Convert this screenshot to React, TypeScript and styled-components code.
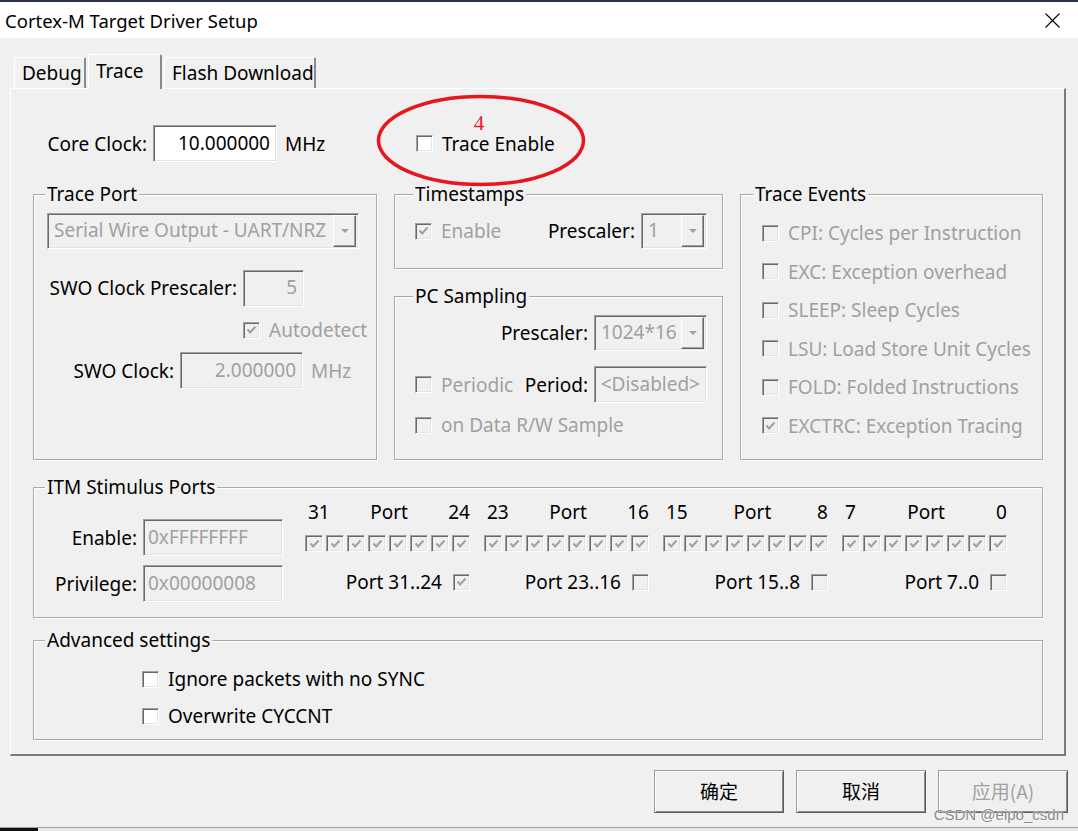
import React from 'react';
import styled, { createGlobalStyle } from 'styled-components';

const GlobalStyle = createGlobalStyle`
  html, body {
    margin: 0;
    padding: 0;
    background: #f0f0f0;
  }
  body {
    font-family: 'Noto Sans', 'Noto Sans CJK SC', sans-serif;
    font-size: 19px;
    color: #1a1a1a;
  }
  * {
    box-sizing: border-box;
  }
`;

const dim = '#a0a0a0';

const Window = styled.div`
  position: relative;
  width: 1078px;
  height: 831px;
  overflow: hidden;
  background: #f0f0f0;
`;
const TitleBar = styled.div`
  display: flex;
  align-items: center;
  justify-content: space-between;
  height: 38px;
  padding: 0 18px 0 5px;
  background: #fff;
  border-top: 2px solid #27324a;
`;
const Title = styled.div`
  font-size: 18.5px;
  color: #000;
`;
const CloseIcon = styled.svg`
  display: block;
  width: 15px;
  height: 15px;
`;
const Body = styled.div`
  padding: 16px 0 0 10px;
`;
const TabStrip = styled.div`
  position: relative;
  z-index: 1;
  display: flex;
  align-items: flex-end;
  height: 34px;
  margin-left: 4px;
`;
const Tab = styled.div<{ $active?: boolean; $w: number }>`
  display: flex;
  align-items: center;
  width: ${(p) => p.$w}px;
  height: ${(p) => (p.$active ? 35 : 31)}px;
  margin-right: 2px;
  margin-bottom: ${(p) => (p.$active ? -1 : 0)}px;
  padding: 0 0 ${(p) => (p.$active ? 3 : 0)}px 7px;
  background: #f0f0f0;
  border-top: 1px solid #fff;
  border-left: 1px solid #fff;
  border-right: 2px solid #8a8a8a;
  border-radius: 2px 2px 0 0;
  color: #000;
  white-space: nowrap;
`;
const Panel = styled.div`
  position: relative;
  width: 1056px;
  height: 668px;
  padding: 36px 21px 0 22px;
  border-top: 1px solid #fff;
  border-left: 1px solid #fff;
  border-right: 2px solid #7a7a7a;
  border-bottom: 2px solid #7a7a7a;
`;
const TopRow = styled.div`
  display: flex;
  align-items: center;
  height: 37px;
  padding-left: 14px;
`;
const ClockField = styled.div`
  display: flex;
  align-items: center;
  width: 369px;
`;
const FieldLabel = styled.span<{ $w?: number }>`
  flex-shrink: 0;
  width: ${(p) => (p.$w ? `${p.$w}px` : 'auto')};
  margin-right: 6px;
  text-align: right;
  white-space: nowrap;
  color: #000;
`;
const TextBox = styled.div<{ $w: number; $disabled?: boolean; $left?: boolean }>`
  display: flex;
  align-items: center;
  justify-content: ${(p) => (p.$left ? 'flex-start' : 'flex-end')};
  flex-shrink: 0;
  width: ${(p) => p.$w}px;
  height: 37px;
  padding: 0 6px 2px 4px;
  background: ${(p) => (p.$disabled ? '#f0f0f0' : '#fff')};
  border: 1px solid;
  border-color: #a0a0a0 #fff #fff #a0a0a0;
  box-shadow: inset 1px 1px 0 #696969, inset -1px -1px 0 #e3e3e3;
  color: ${(p) => (p.$disabled ? dim : '#000')};
  white-space: nowrap;
`;
const Unit = styled.span<{ $disabled?: boolean }>`
  margin-left: 8px;
  color: ${(p) => (p.$disabled ? dim : '#000')};
`;
const ComboBox = styled.div<{ $w: number }>`
  display: flex;
  align-items: stretch;
  flex-shrink: 0;
  width: ${(p) => p.$w}px;
  height: 36px;
  background: #f0f0f0;
  border: 1px solid;
  border-color: #a0a0a0 #fff #fff #a0a0a0;
  box-shadow: inset 1px 1px 0 #696969, inset -1px -1px 0 #e3e3e3;
  padding: 1px 2px 1px 1px;
`;
const ComboText = styled.div`
  flex: 1;
  display: flex;
  align-items: center;
  padding: 0 0 2px 5px;
  color: ${dim};
  white-space: nowrap;
  overflow: hidden;
`;
const ComboArrow = styled.div`
  display: flex;
  align-items: center;
  justify-content: center;
  width: 23px;
  border: 1px solid;
  border-color: #fff #696969 #696969 #fff;
  box-shadow: inset -1px -1px 0 #a0a0a0;
  &::after {
    content: '';
    border-left: 4px solid transparent;
    border-right: 4px solid transparent;
    border-top: 4px solid ${dim};
  }
`;
const BoxFrame = styled.span<{ $size: number; $disabled?: boolean }>`
  display: inline-flex;
  align-items: center;
  justify-content: center;
  flex-shrink: 0;
  width: ${(p) => p.$size}px;
  height: 17px;
  background: ${(p) => (p.$disabled ? '#f0f0f0' : '#fff')};
  border: 1px solid;
  border-color: #a0a0a0 #fff #fff #a0a0a0;
  box-shadow: inset 1px 1px 0 #696969, inset -1px -1px 0 #e3e3e3;
`;
const CheckRow = styled.div<{ $disabled?: boolean; $h?: number }>`
  display: flex;
  align-items: center;
  height: ${(p) => p.$h ?? 24}px;
  color: ${(p) => (p.$disabled ? dim : '#000')};
  white-space: nowrap;
`;
const CheckText = styled.span`
  margin-left: 9px;
`;
const GroupGrid = styled.div`
  display: grid;
  grid-template-columns: 344px 329px 303px;
  column-gap: 17px;
  height: 266px;
  margin-top: 32px;
`;
const MidColumn = styled.div`
  display: flex;
  flex-direction: column;
  gap: 27px;
`;
const Group = styled.div<{ $h?: number; $pl: number; $pr?: number }>`
  height: ${(p) => (p.$h ? `${p.$h}px` : 'auto')};
  flex: ${(p) => (p.$h ? 'none' : 1)};
  padding: 0 ${(p) => p.$pr ?? 0}px 0 ${(p) => p.$pl}px;
  border: 1px solid #a9a9a9;
  box-shadow: inset 1px 1px 0 #fff, 1px 1px 0 #fff;
`;
const GroupTitle = styled.div<{ $x?: number }>`
  width: fit-content;
  margin: -13px 0 0 ${(p) => p.$x ?? -2}px;
  padding: 0 2px;
  line-height: 24px;
  background: #f0f0f0;
  color: #000;
  white-space: nowrap;
`;
const Line = styled.div<{ $mt: number; $h?: number; $justify?: string; $pl?: number }>`
  display: flex;
  align-items: center;
  justify-content: ${(p) => p.$justify ?? 'flex-start'};
  height: ${(p) => p.$h ?? 24}px;
  margin-top: ${(p) => p.$mt}px;
  padding-left: ${(p) => p.$pl ?? 0}px;
`;
const RightBlock = styled.div`
  display: flex;
  align-items: center;
`;
const EventList = styled.div`
  display: flex;
  flex-direction: column;
  gap: 14.6px;
  margin-top: 15px;
`;
const ItmGroup = styled(Group)`
  margin-top: 27px;
`;
const ItmBody = styled.div`
  display: flex;
  align-items: flex-start;
`;
const ItmFields = styled.div`
  display: flex;
  flex-direction: column;
  gap: 9px;
  margin-top: 20px;
`;
const ItmField = styled.div`
  display: flex;
  align-items: center;
`;
const PortGrid = styled.div`
  display: grid;
  grid-template-columns: repeat(4, 165px);
  column-gap: 14px;
  margin: 1px 0 0 22px;
`;
const PortColumn = styled.div`
  display: flex;
  flex-direction: column;
`;
const PortHeader = styled.div`
  display: flex;
  justify-content: space-between;
  height: 24px;
  line-height: 24px;
  padding: 0 0 0 3px;
  color: #000;
`;
const PortBoxes = styled.div`
  display: grid;
  grid-template-columns: repeat(8, 18px);
  column-gap: 3px;
  margin-top: 11px;
`;
const PortPrivilege = styled.div`
  display: flex;
  align-items: center;
  justify-content: flex-end;
  height: 24px;
  margin-top: 18px;
  color: #000;
`;
const PrivText = styled.span`
  margin-right: 11px;
`;
const AdvancedGroup = styled(Group)`
  margin-top: 22px;
`;
const Annotation = styled.svg`
  position: absolute;
  left: 364px;
  top: 4px;
  width: 212px;
  height: 95px;
  pointer-events: none;
`;
const ButtonRow = styled.div`
  display: flex;
  justify-content: flex-end;
  gap: 12px;
  width: 1058px;
  margin-top: 14px;
`;
const Button = styled.div<{ $disabled?: boolean }>`
  display: flex;
  align-items: center;
  justify-content: center;
  width: 130px;
  height: 43px;
  padding-bottom: 2px;
  background: #f0f0f0;
  border: 1px solid;
  border-color: #9a9a9a #5a5a5a #5a5a5a #9a9a9a;
  box-shadow: inset 1px 1px 0 #fff, inset -1px -1px 0 #8a8a8a;
  font-family: 'Noto Sans CJK SC', 'Noto Sans', sans-serif;
  font-size: 19px;
  color: ${(p) => (p.$disabled ? dim : '#000')};
`;
const Watermark = styled.div`
  position: absolute;
  right: 14px;
  bottom: 8px;
  font-family: 'Liberation Sans', sans-serif;
  font-size: 15px;
  color: #8a8a8a;
  text-shadow: 0 0 2px #fff, 0 0 1px #fff;
`;
const Footer = styled.div`
  display: flex;
  height: 4px;
  margin-top: 14px;
  border-top: 1px solid #a0a0a0;
  background: #e8e8e8;
`;
const FooterBlock = styled.div`
  width: 38px;
  background: #111;
`;

function CheckBox({ checked, disabled, size = 17 }: { checked?: boolean; disabled?: boolean; size?: number }) {
  return (
    <BoxFrame $size={size} $disabled={disabled}>
      {checked && (
        <svg width='11' height='10' viewBox='0 0 11 10'>
          <polyline points='1.5,4.5 4.2,7.5 9.5,1.5' fill='none' stroke={dim} strokeWidth='2' />
        </svg>
      )}
    </BoxFrame>
  );
}

function Check({ label, checked, disabled }: { label: string; checked?: boolean; disabled?: boolean }) {
  return (
    <CheckRow $disabled={disabled}>
      <CheckBox checked={checked} disabled={disabled} />
      <CheckText>{label}</CheckText>
    </CheckRow>
  );
}

function Combo({ w, value }: { w: number; value: string }) {
  return (
    <ComboBox $w={w}>
      <ComboText>{value}</ComboText>
      <ComboArrow />
    </ComboBox>
  );
}

const traceEvents = [
  { label: 'CPI: Cycles per Instruction', checked: false },
  { label: 'EXC: Exception overhead', checked: false },
  { label: 'SLEEP: Sleep Cycles', checked: false },
  { label: 'LSU: Load Store Unit Cycles', checked: false },
  { label: 'FOLD: Folded Instructions', checked: false },
  { label: 'EXCTRC: Exception Tracing', checked: true },
];

const portGroups = [
  { hi: 31, lo: 24, priv: true },
  { hi: 23, lo: 16, priv: false },
  { hi: 15, lo: 8, priv: false },
  { hi: 7, lo: 0, priv: false },
];

export default function App() {
  return (
    <Window>
      <GlobalStyle />
      <TitleBar>
        <Title>Cortex-M Target Driver Setup</Title>
        <CloseIcon viewBox='0 0 15 15'>
          <path d='M0.5 0.5 L14.5 14.5 M14.5 0.5 L0.5 14.5' stroke='#000' strokeWidth='1.1' fill='none' />
        </CloseIcon>
      </TitleBar>
      <Body>
        <TabStrip>
          <Tab $w={72}>Debug</Tab>
          <Tab $w={74} $active>
            Trace
          </Tab>
          <Tab $w={152}>Flash Download</Tab>
        </TabStrip>
        <Panel>
          <TopRow>
            <ClockField>
              <FieldLabel $w={100}>Core Clock:</FieldLabel>
              <TextBox $w={124}>10.000000</TextBox>
              <Unit>MHz</Unit>
            </ClockField>
            <Check label='Trace Enable' />
          </TopRow>

          <GroupGrid>
            <Group $pl={13}>
              <GroupTitle>Trace Port</GroupTitle>
              <Line $mt={7} $h={36}>
                <Combo w={312} value='Serial Wire Output - UART/NRZ' />
              </Line>
              <Line $mt={21} $h={36}>
                <FieldLabel $w={190}>SWO Clock Prescaler:</FieldLabel>
                <TextBox $w={61} $disabled>
                  5
                </TextBox>
              </Line>
              <Line $mt={12} $pl={196}>
                <Check label='Autodetect' checked disabled />
              </Line>
              <Line $mt={10} $h={37}>
                <FieldLabel $w={127}>SWO Clock:</FieldLabel>
                <TextBox $w={123} $disabled>
                  2.000000
                </TextBox>
                <Unit $disabled>MHz</Unit>
              </Line>
            </Group>

            <MidColumn>
              <Group $h={75} $pl={20} $pr={15}>
                <GroupTitle>Timestamps</GroupTitle>
                <Line $mt={7} $h={36} $justify='space-between'>
                  <Check label='Enable' checked disabled />
                  <RightBlock>
                    <FieldLabel>Prescaler:</FieldLabel>
                    <Combo w={66} value='1' />
                  </RightBlock>
                </Line>
              </Group>
              <Group $pl={20} $pr={15}>
                <GroupTitle>PC Sampling</GroupTitle>
                <Line $mt={7} $h={36} $justify='flex-end'>
                  <FieldLabel>Prescaler:</FieldLabel>
                  <Combo w={113} value='1024*16' />
                </Line>
                <Line $mt={15} $h={37} $justify='space-between'>
                  <Check label='Periodic' disabled />
                  <RightBlock>
                    <FieldLabel>Period:</FieldLabel>
                    <TextBox $w={113} $disabled>
                      &lt;Disabled&gt;
                    </TextBox>
                  </RightBlock>
                </Line>
                <Line $mt={10}>
                  <Check label='on Data R/W Sample' disabled />
                </Line>
              </Group>
            </MidColumn>

            <Group $pl={21}>
              <GroupTitle $x={-9}>Trace Events</GroupTitle>
              <EventList>
                {traceEvents.map((e) => (
                  <Check key={e.label} label={e.label} checked={e.checked} disabled />
                ))}
              </EventList>
            </Group>
          </GroupGrid>

          <ItmGroup $h={131} $pl={13}>
            <GroupTitle>ITM Stimulus Ports</GroupTitle>
            <ItmBody>
              <ItmFields>
                <ItmField>
                  <FieldLabel $w={90}>Enable:</FieldLabel>
                  <TextBox $w={140} $disabled $left>
                    0xFFFFFFFF
                  </TextBox>
                </ItmField>
                <ItmField>
                  <FieldLabel $w={90}>Privilege:</FieldLabel>
                  <TextBox $w={140} $disabled $left>
                    0x00000008
                  </TextBox>
                </ItmField>
              </ItmFields>
              <PortGrid>
                {portGroups.map((g) => (
                  <PortColumn key={g.hi}>
                    <PortHeader>
                      <span>{g.hi}</span>
                      <span>Port</span>
                      <span>{g.lo}</span>
                    </PortHeader>
                    <PortBoxes>
                      {Array.from({ length: 8 }, (_, i) => (
                        <CheckBox key={i} checked disabled size={18} />
                      ))}
                    </PortBoxes>
                    <PortPrivilege>
                      <PrivText>
                        Port {g.hi}..{g.lo}
                      </PrivText>
                      <CheckBox checked={g.priv} disabled />
                    </PortPrivilege>
                  </PortColumn>
                ))}
              </PortGrid>
            </ItmBody>
          </ItmGroup>

          <AdvancedGroup $h={100} $pl={108}>
            <GroupTitle $x={-97}>Advanced settings</GroupTitle>
            <Line $mt={15}>
              <Check label='Ignore packets with no SYNC' />
            </Line>
            <Line $mt={13}>
              <Check label='Overwrite CYCCNT' />
            </Line>
          </AdvancedGroup>

          <Annotation viewBox='0 0 212 95'>
            <ellipse cx='106' cy='47.5' rx='102.5' ry='44' fill='none' stroke='#e8141e' strokeWidth='3.5' />
            <text x='104' y='37' textAnchor='middle' fontFamily='Liberation Serif, serif' fontSize='21' fill='#e8202a'>
              4
            </text>
          </Annotation>
        </Panel>
        <ButtonRow>
          <Button>确定</Button>
          <Button>取消</Button>
          <Button $disabled>应用(A)</Button>
        </ButtonRow>
      </Body>
      <Footer>
        <FooterBlock />
      </Footer>
      <Watermark>CSDN @eipo_csdn</Watermark>
    </Window>
  );
}
